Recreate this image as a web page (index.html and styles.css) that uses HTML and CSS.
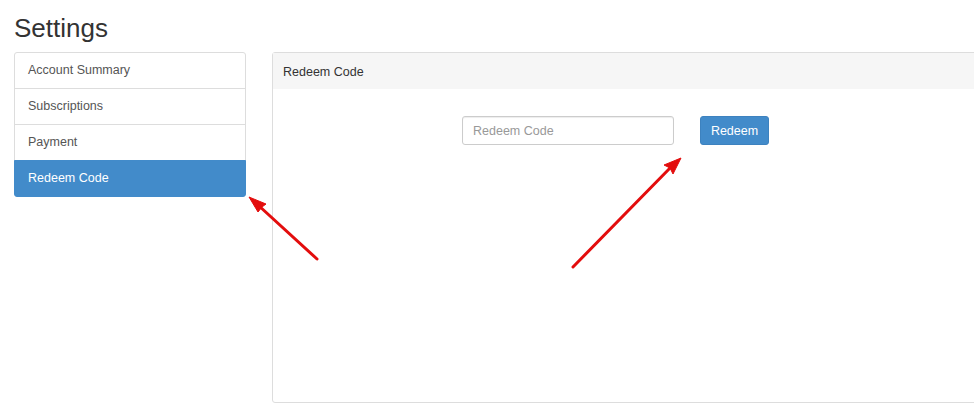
FILE: index.html
```html
<!DOCTYPE html>
<html>
<head>
<meta charset="utf-8">
<link rel="stylesheet" href="styles.css">
</head>
<body>
<div class="page">
  <h1 class="title">Settings</h1>
  <div class="layout">
    <nav class="list-group">
      <a class="item">Account Summary</a>
      <a class="item">Subscriptions</a>
      <a class="item">Payment</a>
      <a class="item active">Redeem Code</a>
    </nav>
    <section class="panel">
      <div class="panel-heading">Redeem Code</div>
      <div class="panel-body">
        <input class="code-input" type="text" placeholder="Redeem Code">
        <button class="btn">Redeem</button>
      </div>
    </section>
  </div>
</div>
<svg class="annotations" width="974" height="405" viewBox="0 0 974 405">
  <g fill="#e30d0d" stroke="#e30d0d">
    <line x1="317" y1="259" x2="258" y2="205" stroke-width="3" stroke-linecap="round"/>
    <polygon points="249,197 266,204 262,207 258,212" stroke-width="1" stroke-linejoin="round"/>
    <line x1="573" y1="267" x2="672" y2="166" stroke-width="3" stroke-linecap="round"/>
    <polygon points="681,158 673,174 670,168 664,165" stroke-width="1" stroke-linejoin="round"/>
  </g>
</svg>
</body>
</html>
```
FILE: styles.css
```css
html, body {
  margin: 0;
  padding: 0;
  background: #fff;
  overflow: hidden;
}
body {
  width: 974px;
  height: 405px;
  position: relative;
  font-family: "Liberation Sans", Arial, sans-serif;
  color: #333;
}
.page {
  padding: 13px 0 0 14px;
}
.title {
  margin: 0 0 8px 0;
  font-size: 26px;
  line-height: 31px;
  font-weight: 400;
  color: #333;
}
.layout {
  display: flex;
  align-items: flex-start;
  gap: 26px;
}
.list-group {
  flex: none;
  width: 232px;
  display: flex;
  flex-direction: column;
}
.item {
  display: block;
  box-sizing: border-box;
  height: 37px;
  line-height: 35px;
  padding: 0 12px 0 13px;
  font-size: 12.5px;
  color: #555;
  background: #fff;
  border: 1px solid #ddd;
  margin-bottom: -1px;
}
.item:first-child {
  border-radius: 3px 3px 0 0;
}
.item:last-child {
  margin-bottom: 0;
  border-radius: 0 0 3px 3px;
}
.item.active {
  background: #428bca;
  border-color: #428bca;
  color: #fff;
}
.panel {
  flex: none;
  width: 740px;
  height: 351px;
  box-sizing: border-box;
  border: 1px solid #ddd;
  border-radius: 3px;
  background: #fff;
}
.panel-heading {
  height: 36px;
  line-height: 38px;
  padding: 0 10px;
  background: #f6f6f6;
  font-size: 12.5px;
  color: #333;
}
.panel-body {
  display: flex;
  align-items: center;
  gap: 26px;
  padding: 27px 0 0 189px;
}
.code-input {
  box-sizing: border-box;
  width: 212px;
  height: 29px;
  padding: 0 10px;
  border: 1px solid #ccc;
  border-radius: 3px;
  box-shadow: inset 0 1px 1px rgba(0,0,0,0.075);
  font-family: "Liberation Sans", Arial, sans-serif;
  font-size: 12.5px;
  color: #555;
  outline: none;
}
.code-input::placeholder {
  color: #999;
}
.btn {
  box-sizing: border-box;
  width: 69px;
  height: 29px;
  padding: 0;
  border: 1px solid #3d82bf;
  border-radius: 3px;
  background: #428bca;
  color: #fff;
  font-family: "Liberation Sans", Arial, sans-serif;
  font-size: 12.5px;
}
.annotations {
  position: absolute;
  left: 0;
  top: 0;
  pointer-events: none;
}
```
